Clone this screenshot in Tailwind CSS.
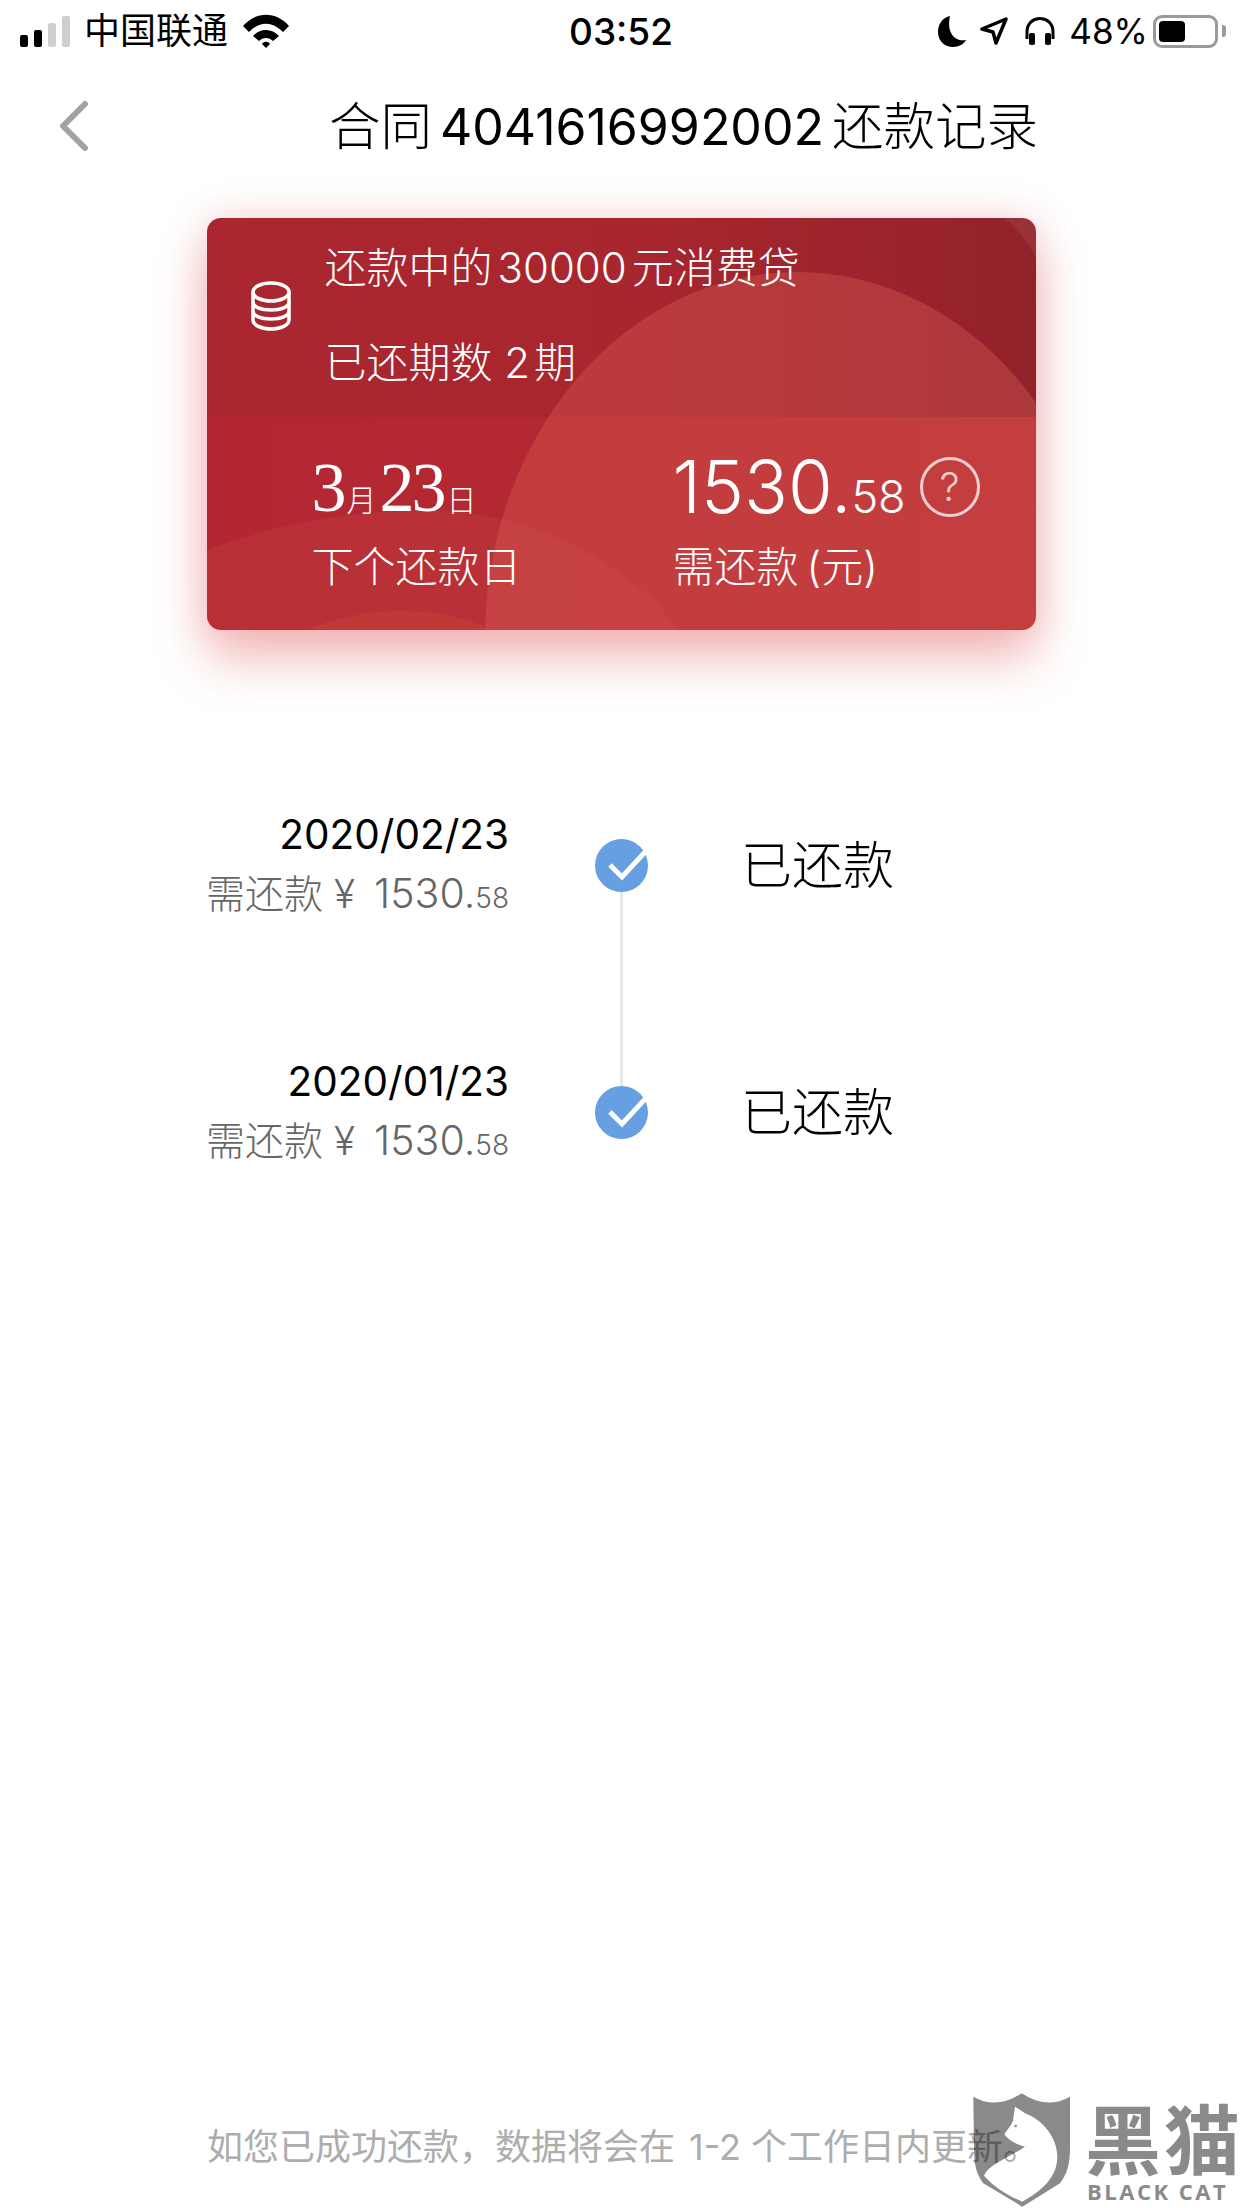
<!DOCTYPE html>
<html>
<head>
    <meta charset="utf-8">
    <script src="https://cdn.jsdelivr.net/npm/@tailwindcss/browser@4"></script>
</head>
<body class="bg-white">
<div class="relative w-[1242px] h-[2208px] overflow-hidden flex flex-col bg-white text-black font-['Inter','Noto_Sans_CJK_SC',sans-serif]">

    <!-- status bar -->
    <div class="h-[62px] grid grid-cols-3 items-center shrink-0">
        <div class="flex items-center pl-[20px]">
            <div class="flex items-end gap-[6px] h-[31px]">
                <div class="w-[8px] h-[12px] rounded-[2px] bg-black"></div>
                <div class="w-[8px] h-[17px] rounded-[2px] bg-black"></div>
                <div class="w-[8px] h-[24px] rounded-[2px] bg-[#cfcfcf]"></div>
                <div class="w-[8px] h-[31px] rounded-[2px] bg-[#cfcfcf]"></div>
            </div>
            <span class="ml-[14px] text-[36px] leading-none">中国联通</span>
            <svg class="ml-[15px]" width="46" height="34" viewBox="0 0 46 34">
                <path d="M0 12 C13 -3 33 -3 46 12 L40 18 C29 7 17 7 6 18Z" fill="#000"/>
                <path d="M10 22 C17 14 29 14 36 22 L30 27 C26 23 20 23 16 27Z" fill="#000"/>
                <path d="M19 30 C21 27 25 27 27 30 L23 34Z" fill="#000"/>
            </svg>
        </div>
        <div class="text-center text-[37px] font-medium leading-none">03:52</div>
        <div class="flex items-center justify-end pr-[16px]">
            <svg width="28" height="31" viewBox="0 0 28 31"><path d="M12 0 C3 2 0 10 0 16 C0 25 7 31 15 31 C21 31 26 28 28 24 C18 26 8 18 12 0Z" fill="#000"/></svg>
            <svg class="ml-[14px]" width="28" height="28" viewBox="0 0 28 28"><path d="M26 2 L2 12 L13 15 L16 26Z" fill="none" stroke="#000" stroke-width="3.5" stroke-linejoin="round"/></svg>
            <svg class="ml-[17px]" width="30" height="28" viewBox="0 0 30 28"><path d="M2 22 V15 C2 -3 28 -3 28 15 V22" fill="none" stroke="#000" stroke-width="3"/><rect x="4" y="16" width="6" height="12" rx="2" fill="#000"/><rect x="20" y="16" width="6" height="12" rx="2" fill="#000"/></svg>
            <span class="ml-[14px] text-[35px] leading-none">48%</span>
            <div class="ml-[5px] w-[65px] h-[33px] rounded-[9px] border-[3px] border-[#9a9a9a] p-[3px]">
                <div class="w-[26px] h-full rounded-[4px] bg-black"></div>
            </div>
            <div class="ml-[4px] w-[4px] h-[12px] rounded-r-[3px] bg-[#9a9a9a]"></div>
        </div>
    </div>

    <!-- title -->
    <div class="relative h-[130px] shrink-0 flex items-center pl-[329px]">
        <svg class="absolute left-[57px] top-[39px]" width="32" height="50" viewBox="0 0 32 50">
            <path d="M28 3 L6 25 L28 47" fill="none" stroke="#a2a2a2" stroke-width="6" stroke-linecap="round" stroke-linejoin="round"/>
        </svg>
        <h1 class="text-[51.5px] font-light leading-none whitespace-nowrap">合同<span class="mx-[8px] text-[50px] font-normal">4041616992002</span>还款记录</h1>
    </div>

    <!-- red card -->
    <div class="relative mt-[26px] mx-auto w-[829px] h-[412px] shrink-0 rounded-[14px] text-white shadow-[0_30px_50px_rgba(225,80,80,0.36),0_0_40px_rgba(225,80,80,0.22)]">
        <svg class="absolute inset-0 rounded-[14px]" width="829" height="412" viewBox="0 0 829 412">
            <defs>
                <linearGradient id="topBand" x1="0" x2="1" y1="0" y2="0">
                    <stop offset="0" stop-color="#aa2630"/>
                    <stop offset="0.5" stop-color="#a9262f"/>
                    <stop offset="1" stop-color="#92222a"/>
                </linearGradient>
                <linearGradient id="lowBand" x1="0" x2="1" y1="0" y2="0">
                    <stop offset="0" stop-color="#b22731"/>
                    <stop offset="1" stop-color="#b62b31"/>
                </linearGradient>
            </defs>
            <rect width="829" height="199" fill="url(#topBand)"/>
            <rect y="199" width="829" height="213" fill="url(#lowBand)"/>
            <path d="M0 332 C70 305 150 292 217 292 C310 292 390 330 450 385 L470 412 L0 412Z" fill="#e0605a" fill-opacity="0.15"/>
            <path d="M100 412 C130 398 170 393 190 393 C230 393 260 400 285 412Z" fill="#e8754f" fill-opacity="0.15"/>
            <ellipse cx="590" cy="420" rx="312" ry="366" fill="#e0605a" fill-opacity="0.35"/>
            <path d="M798 0 Q818 18 829 40 V0Z" fill="#fff" fill-opacity="0.07"/>
        </svg>
        <div class="relative flex items-center h-[199px] pl-[44px]">
            <svg class="mb-[24px]" width="40" height="50" viewBox="0 0 40 50" fill="none" stroke="#fff" stroke-width="3.5">
                <ellipse cx="20" cy="11" rx="18" ry="9"/>
                <path d="M2 11 V39 C2 44 10 48 20 48 C30 48 38 44 38 39 V11"/>
                <path d="M2 21 C2 26 10 29 20 29 C30 29 38 26 38 21"/>
                <path d="M2 30 C2 35 10 38 20 38 C30 38 38 35 38 30"/>
            </svg>
            <div class="ml-[34px] mb-[6px] text-[42px] font-light leading-[95px]">
                <div>还款中的<span class="mx-[5px]">30000</span>元消费贷</div>
                <div>已还期数 <span class="mr-[4px]">2</span>期</div>
            </div>
        </div>
        <div class="relative grid grid-cols-[361px_1fr] h-[213px] pl-[105px] pt-[36px]">
            <div>
                <div class="flex items-baseline h-[68px] leading-none">
                    <span class="font-['Liberation_Serif',serif] text-[70px] tracking-[-3px]">3</span>
                    <span class="text-[30px] font-light mx-[3px]">月</span>
                    <span class="font-['Liberation_Serif',serif] text-[70px] tracking-[-3px]">23</span>
                    <span class="text-[30px] font-light ml-[3px]">日</span>
                </div>
                <div class="mt-[22px] text-[42px] font-light leading-[48px]">下个还款日</div>
            </div>
            <div>
                <div class="flex items-center h-[68px]">
                    <span class="text-[72.5px] font-light leading-none">1530.<span class="text-[45px]">58</span></span>
                    <span class="ml-[14px] w-[60px] h-[60px] rounded-full border-[3px] border-white/75 flex items-center justify-center text-[40px] font-light text-white/75 leading-none">?</span>
                </div>
                <div class="mt-[22px] text-[42px] font-light leading-[48px]">需还款<span class="ml-[8px]">(元)</span></div>
            </div>
        </div>
    </div>

    <!-- timeline -->
    <div class="mt-[209px] shrink-0">
        <div class="flex items-center h-[53px]">
            <div class="w-[509px] shrink-0 text-right">
                <div class="text-[40.5px] leading-[60px]">2020/02/23</div>
                <div class="text-[39px] font-light leading-[56px] text-[#666]">需还款 ¥ <span class="ml-[8px] text-[41px]">1530.<span class="text-[28px]">58</span></span></div>
            </div>
            <div class="ml-[86px] w-[53px] h-[53px] rounded-full bg-[#669fe2] shrink-0">
                <svg width="53" height="53" viewBox="0 0 53 53"><path d="M15 26 L27 38 L52 11" fill="none" stroke="#fff" stroke-width="5"/></svg>
            </div>
            <div class="ml-[93px] text-[51px] font-light leading-none">已还款</div>
        </div>
        <div class="ml-[620px] w-[3px] h-[194px] bg-[#e8e8e8]"></div>
        <div class="flex items-center h-[53px]">
            <div class="w-[509px] shrink-0 text-right">
                <div class="text-[40.5px] leading-[60px]">2020/01/23</div>
                <div class="text-[39px] font-light leading-[56px] text-[#666]">需还款 ¥ <span class="ml-[8px] text-[41px]">1530.<span class="text-[28px]">58</span></span></div>
            </div>
            <div class="ml-[86px] w-[53px] h-[53px] rounded-full bg-[#669fe2] shrink-0">
                <svg width="53" height="53" viewBox="0 0 53 53"><path d="M15 26 L27 38 L52 11" fill="none" stroke="#fff" stroke-width="5"/></svg>
            </div>
            <div class="ml-[93px] text-[51px] font-light leading-none">已还款</div>
        </div>
    </div>

    <!-- footer note -->
    <div class="mt-auto mb-[36px] pl-[207px] text-[36px] leading-[50px] text-[#adadad] whitespace-nowrap">如您已成功还款，数据将会在<span class="ml-[14px]">1-2</span> 个工作日内更新。</div>

    <!-- watermark over the page -->
    <div class="absolute left-[960px] top-[2085px] w-[282px] h-[123px]">
        <svg class="absolute inset-0" width="282" height="123" viewBox="0 0 846 369">
            <path fill-rule="evenodd" fill="#000" fill-opacity="0.46" d="M40 35 Q110 75 185 25 Q260 75 330 35 L330 190 C330 240 320 270 300 295 L187 365 L70 295 C50 270 42 240 42 190Z
                M165 65 L195 85 C250 105 292 160 292 215 C292 280 240 320 187 350 C150 335 100 305 72 272 C85 240 130 228 195 185 C170 178 150 170 133 148 C145 130 160 115 160 100Z"/>
            <circle cx="167" cy="123" r="4" fill="#000" fill-opacity="0.46"/>
        </svg>
        <div class="absolute left-[125px] top-[13px] flex text-[76px] font-bold leading-none font-['Noto_Sans_CJK_SC',sans-serif] text-[#8a8a8a]"><span>黑</span><span class="ml-[3px]">猫</span></div>
        <div class="absolute left-[127px] top-[95px] text-[22px] font-bold leading-none tracking-[2.5px] text-[#8a8a8a] font-['Open_Sans',sans-serif] whitespace-nowrap">BLACK CAT</div>
    </div>
</div>
</body>
</html>
